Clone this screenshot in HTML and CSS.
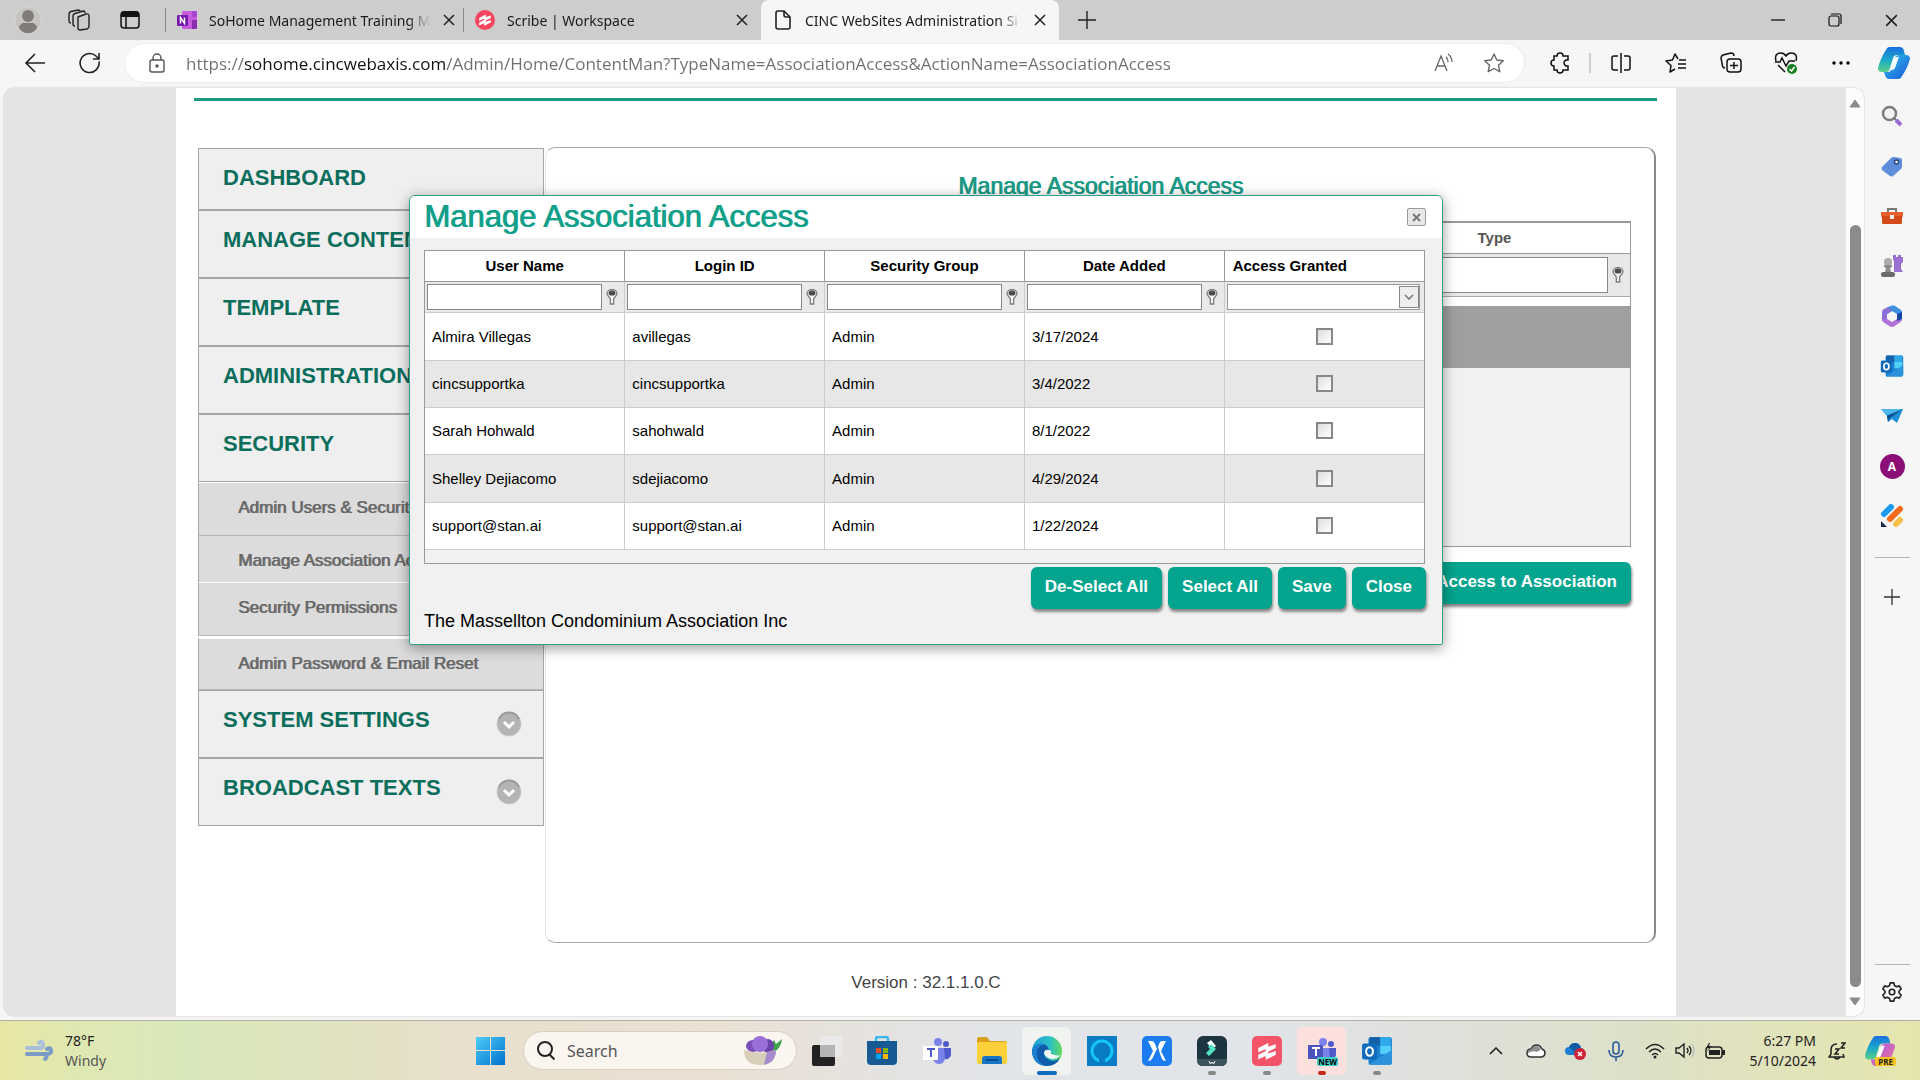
FILE: index.html
```html
<!DOCTYPE html>
<html lang="en">
<head>
    <meta charset="UTF-8">
    <title>CINC WebSites Administration Site</title>
    <link rel="stylesheet" href="styles.css">
</head>
<body>
<svg class="defs" width="0" height="0">
    <defs>
        <linearGradient id="cpA" x1="0" y1="0" x2="0" y2="1"><stop offset="0" stop-color="#1b6fe0"/><stop offset=".5" stop-color="#17a8c8"/><stop offset="1" stop-color="#5bd08a"/></linearGradient>
        <linearGradient id="cpB" x1="0" y1="0" x2="1" y2="1"><stop offset="0" stop-color="#35c4f0"/><stop offset="1" stop-color="#1556d6"/></linearGradient>
        <linearGradient id="cpC" x1="0" y1="0" x2="1" y2="1"><stop offset="0" stop-color="#a65cf0"/><stop offset="1" stop-color="#f2708c"/></linearGradient>
        <linearGradient id="edgeA" x1="0" y1="0" x2="1" y2="0"><stop offset="0" stop-color="#1f9fd8"/><stop offset=".6" stop-color="#2cc0c8"/><stop offset="1" stop-color="#63d858"/></linearGradient>
        <linearGradient id="winA" x1="0" y1="0" x2="1" y2="1"><stop offset="0" stop-color="#4fcdf7"/><stop offset="1" stop-color="#0070cc"/></linearGradient>
        <symbol id="funnel" viewBox="0 0 12 16">
            <path d="M1 4.500a5 4 0 0 1 10 0c0 2.500-3 3.500-3.300 5.500v5H4.300v-5C4 8 1 7 1 4.500z" fill="#f2f2f2" stroke="#7d7d7d" stroke-width="1.300"/>
            <ellipse cx="6" cy="4" rx="3.500" ry="2.600" fill="#4c4c4c"/>
        </symbol>
        <symbol id="cross" viewBox="0 0 14 14">
            <path d="M2 2l10 10M12 2L2 12" fill="none" stroke="#222" stroke-width="1.500"/>
        </symbol>
        <symbol id="arrow" viewBox="0 0 26 26">
            <circle cx="13" cy="13" r="12" fill="#b4b4b4" stroke="#c9c9c9"/>
            <path d="M3 8a11 11 0 0 1 20 0" fill="none" stroke="#999" stroke-width="2"/>
            <path d="M8 11l5 5 5-5" fill="none" stroke="#fff" stroke-width="3"/>
        </symbol>
        <symbol id="scribe" viewBox="0 0 24 24">
            <path d="M5 9.500l8-4v3l6-2v3l-8 4v-3l-6 2.500zM5 15l8-4v3l6-2v3l-8 4v-3l-6 2.500z" fill="#fff"/>
        </symbol>
        <symbol id="outlook" viewBox="0 0 30 30">
            <path d="M9 2h18a2 2 0 0 1 2 2v22a2 2 0 0 1-2 2H9a2 2 0 0 1-2-2V4a2 2 0 0 1 2-2z" fill="#1c7fd0"/>
            <path d="M8 2h10v8H8z" fill="#1561a8"/><path d="M18 2h10v8H18z" fill="#2fa8ea"/>
            <path d="M18 10h10v8H18z" fill="#50d0f8"/><path d="M7 28l22-14v12a2 2 0 0 1-2 2z" fill="#2d93dc"/>
            <rect x="1" y="8" width="14" height="15" rx="2" fill="#0f6cbd"/>
            <ellipse cx="8" cy="15.500" rx="3.200" ry="4" fill="none" stroke="#fff" stroke-width="2"/>
        </symbol>
        <symbol id="teams" viewBox="0 0 28 28">
            <circle cx="15" cy="5" r="4" fill="#7b83eb"/><circle cx="23" cy="7" r="3" fill="#5059c9"/>
            <path d="M9 11h13v9a6 6 0 0 1-12 2z" fill="#7b83eb"/><path d="M21 11h7v7a5 5 0 0 1-6 4z" fill="#5059c9"/>
        </symbol>
    </defs>
</svg>

<header class="tabstrip">
    <div class="tabtools">
        <button class="tool" aria-label="Profile">
            <svg width="28" height="28" viewBox="0 0 28 28"><circle cx="14" cy="14" r="13.500" fill="#c6c5c2" stroke="#dadada"/><circle cx="14" cy="10" r="6" fill="#7f7c79"/><path d="M5 22c0-3 3-5 5-5h8c2 0 5 2 5 5-4 7-14 7-18 0z" fill="#7f7c79"/></svg>
        </button>
        <button class="tool" aria-label="Workspaces">
            <svg width="22" height="22" viewBox="0 0 22 22" fill="none" stroke="#222" stroke-width="1.400"><path d="M10 8l8-3q3-.5 3 2v10q0 2-2 3l-7 1q-2 0-2-2z"/><path d="M7 17q-2 0-2-2V7q0-2 2-2.500l8-2.500q2 0 2 2"/><path d="M3 14q-2 0-2-2V5q0-2 2-2.500L10 1q2 0 2 1"/></svg>
        </button>
        <button class="tool" aria-label="Tab actions">
            <svg width="20" height="20" viewBox="0 0 20 20"><rect x="1" y="2" width="18" height="16" rx="3" fill="none" stroke="#111" stroke-width="1.500"/><path d="M1 7V4q0-3 3-3h12q3 0 3 3v3z" fill="#111"/><path d="M6 6v12" stroke="#111" stroke-width="1.500"/></svg>
        </button>
    </div>
    <div class="tab">
        <svg width="20" height="20" viewBox="0 0 20 20"><rect x="5" y="1" width="15" height="18" rx="1" fill="#c75ddc"/><path d="M15 10h5v8q0 1-1 1h-4z" fill="#8a2bb0"/><path d="M15 1h4q1 0 1 1v5h-5z" fill="#a845cf"/><rect y="5" width="11" height="11" rx="1" fill="#7719aa"/><path d="M3.500 13.500v-6l4 6v-6" fill="none" stroke="#fff" stroke-width="1.400"/></svg>
        <span class="tabname">SoHome Management Training M</span>
        <button class="tabclose" aria-label="Close tab"><svg width="14" height="14"><use href="#cross"/></svg></button>
    </div>
    <div class="tab">
        <svg width="20" height="20" viewBox="0 0 24 24"><circle cx="12" cy="12" r="12" fill="#f5455f"/><use href="#scribe"/></svg>
        <span class="tabname">Scribe | Workspace</span>
        <button class="tabclose" aria-label="Close tab"><svg width="14" height="14"><use href="#cross"/></svg></button>
    </div>
    <div class="tab active">
        <svg width="20" height="20" viewBox="0 0 20 20" fill="none" stroke="#222" stroke-width="1.600"><path d="M11 1H5Q3 1 3 3v14q0 2 2 2h10q2 0 2-2V7z"/><path d="M11 1v4q0 2 2 2h4"/></svg>
        <span class="tabname">CINC WebSites Administration Si</span>
        <button class="tabclose" aria-label="Close tab"><svg width="14" height="14"><use href="#cross"/></svg></button>
    </div>
    <button class="tool" aria-label="New tab"><svg width="18" height="18" viewBox="0 0 18 18"><path d="M9 0v18M0 9h18" stroke="#222" stroke-width="1.400"/></svg></button>
    <div class="winbtns">
        <button aria-label="Minimize"><svg width="14" height="14" viewBox="0 0 14 14"><path d="M0 7h14" stroke="#111" stroke-width="1.300"/></svg></button>
        <button aria-label="Restore"><svg width="14" height="14" viewBox="0 0 14 14" fill="none" stroke="#111" stroke-width="1.200"><rect x="1" y="3" width="10" height="10" rx="2"/><path d="M3 1h8q2 0 2 2v8"/></svg></button>
        <button aria-label="Close window"><svg width="15" height="15"><use href="#cross"/></svg></button>
    </div>
</header>

<div class="toolbar">
    <button class="tool" aria-label="Back"><svg width="22" height="20" viewBox="0 0 22 20" fill="none" stroke="#222" stroke-width="1.600"><path d="M21 10H2M11 1l-9 9 9 9"/></svg></button>
    <button class="tool" aria-label="Refresh"><svg width="22" height="22" viewBox="0 0 22 22" fill="none" stroke="#222" stroke-width="1.600"><path d="M20 9.500A9.500 9.500 0 1 1 17 4l2.500 2.500M20 1v6h-6"/></svg></button>
    <div class="address">
        <svg width="18" height="20" viewBox="0 0 18 20" fill="none" stroke="#555" stroke-width="1.400"><rect x="2" y="7" width="14" height="12" rx="2"/><path d="M5 7V5a4 4 0 0 1 8 0v2"/><circle cx="9" cy="13" r="1" fill="#555"/></svg>
        <input class="url" type="text" aria-label="Address" value="https://sohome.cincwebaxis.com/Admin/Home/ContentMan?TypeName=AssociationAccess&amp;ActionName=AssociationAccess">
        <button class="pillbtn" aria-label="Read aloud"><svg width="20" height="20" viewBox="0 0 20 20" fill="none" stroke="#666" stroke-width="1.300"><path d="M1 18L7 3l6 15M3 13h8M12 4q2 2 2 5M14 1q4 3 4 8"/></svg></button>
        <button class="pillbtn" aria-label="Add to favorites"><svg width="22" height="22" viewBox="0 0 22 22" fill="none" stroke="#666" stroke-width="1.400" stroke-linejoin="round"><path d="M11 2l2.800 6 6.500.8-4.800 4.400 1.300 6.500L11 16.500l-5.800 3.200 1.300-6.500L1.700 8.800 8.200 8z"/></svg></button>
    </div>
    <button class="tool" aria-label="Extensions"><svg width="20" height="22" viewBox="0 0 20 22" fill="none" stroke="#111" stroke-width="1.500"><path d="M4 4h3q0-3 3-3t3 3h5v4h-2q-2 1-2 3t2 3h2v4h-5q0 3-3 3t-3-3H4v-4q-3 0-3-3t3-3z"/></svg></button>
    <span class="sep"></span>
    <button class="tool" aria-label="Split screen"><svg width="22" height="20" viewBox="0 0 22 20" fill="none" stroke="#111" stroke-width="1.500"><path d="M8 3H4Q2 3 2 5v10q0 2 2 2h4M14 3h4q2 0 2 2v10q0 2-2 2h-4M11 0v20"/></svg></button>
    <button class="tool" aria-label="Favorites"><svg width="22" height="22" viewBox="0 0 22 22" fill="none" stroke="#111" stroke-width="1.500" stroke-linejoin="round"><path d="M13 7l-3-5-2.500 6L1 9l5 4.500L5 20l5-3M14 8h7M13 12h8M13 16h8"/></svg></button>
    <button class="tool" aria-label="Collections"><svg width="22" height="22" viewBox="0 0 22 22" fill="none" stroke="#111" stroke-width="1.500"><rect x="7" y="7" width="14" height="13" rx="3"/><path d="M14 10v7M10 13.500h8M5 16q-2 0-2.500-2L1 6q0-2 2-3l8-2q3 0 3 3"/></svg></button>
    <button class="tool" aria-label="Browser essentials"><svg width="24" height="24" viewBox="0 0 24 24" fill="none" stroke="#111" stroke-width="1.500"><path d="M2 10Q0 2 7 2q3 0 5 3 2-3 5-3 7 0 5 8M4 14l7 7M1 11h5l2-4 4 8 3-5h6"/><circle cx="18" cy="18" r="5" fill="#16831f" stroke="none"/><path d="M15.500 18l2 2 3-4" stroke="#fff"/></svg></button>
    <button class="tool" aria-label="Settings and more"><svg width="18" height="6" viewBox="0 0 18 6"><circle cx="2" cy="3" r="1.700"/><circle cx="9" cy="3" r="1.700"/><circle cx="16" cy="3" r="1.700"/></svg></button>
    <button class="tool side" aria-label="Copilot"><svg width="32" height="32" viewBox="0 0 32 32"><path d="M8 3q1-3 4-3h10q3 0 4 4l1 4h-8q-3 0-4 3l-3 10q-1 4-4 4H4q-4 0-4-4 3-11 8-18z" fill="url(#cpA)"/><path d="M24 29q-1 3-4 3H11q-3 0-4-4l-1-3h4q3 0 4-4l3-10q1-3 4-3h7q4 0 4 4-3 10-8 17z" fill="url(#cpB)"/><path d="M16 12q1-2 3-2h2l-4 11q-1 2-3 2h-2z" fill="#f4fbff"/></svg></button>
</div>

<div class="browser">
    <div class="page">
        <div class="container">
            <div class="rule"></div>
            <main class="main">
                <ul class="menu">
                    <li><a href="#">DASHBOARD</a></li>
                    <li><a href="#">MANAGE CONTENT</a></li>
                    <li><a href="#">TEMPLATE</a></li>
                    <li><a href="#">ADMINISTRATION</a></li>
                    <li><a href="#">SECURITY</a></li>
                    <li class="sub"><a href="#">Admin Users &amp; Security</a></li>
                    <li class="sub current"><a href="#">Manage Association Access</a></li>
                    <li class="sub"><a href="#">Security Permissions</a></li>
                    <li class="sub last"><a href="#">Admin Password &amp; Email Reset</a></li>
                    <li><a href="#">SYSTEM SETTINGS <svg width="26" height="26"><use href="#arrow"/></svg></a></li>
                    <li><a href="#">BROADCAST TEXTS <svg width="26" height="26"><use href="#arrow"/></svg></a></li>
                </ul>
                <section class="panel">
                    <h2>Manage Association Access</h2>
                    <div class="listbox">
                        <table class="list">
                            <tr><th></th><th class="typecol">Type</th></tr>
                            <tr class="filters">
                                <td></td>
                                <td><div class="filter"><input type="text" aria-label="Filter Type"><button aria-label="Filter"><svg width="12" height="16"><use href="#funnel"/></svg></button></div></td>
                            </tr>
                            <tr class="blank"><td colspan="2"></td></tr>
                            <tr class="selected"><td colspan="2"></td></tr>
                        </table>
                    </div>
                    <div class="actions"><button class="btn">Access to Association</button></div>
                </section>
            </main>
            <p class="version">Version : 32.1.1.0.C</p>

            <div class="modal" role="dialog" aria-labelledby="modalTitle">
                <div class="modalhead">
                    <h1 id="modalTitle">Manage Association Access</h1>
                    <button class="closebtn" aria-label="Close dialog"><svg width="9" height="9" viewBox="0 0 9 9"><path d="M1 1l7 7M8 1L1 8" stroke="#777" stroke-width="2"/></svg></button>
                </div>
                <div class="modalbody">
                    <div class="gridbox">
                        <table class="grid">
                            <thead>
                            <tr>
                                <th>User Name</th>
                                <th>Login ID</th>
                                <th>Security Group</th>
                                <th>Date Added</th>
                                <th class="left">Access Granted</th>
                            </tr>
                            <tr class="filters">
                                <td><div class="filter"><input type="text" aria-label="Filter User Name"><button aria-label="Filter"><svg width="12" height="16"><use href="#funnel"/></svg></button></div></td>
                                <td><div class="filter"><input type="text" aria-label="Filter Login ID"><button aria-label="Filter"><svg width="12" height="16"><use href="#funnel"/></svg></button></div></td>
                                <td><div class="filter"><input type="text" aria-label="Filter Security Group"><button aria-label="Filter"><svg width="12" height="16"><use href="#funnel"/></svg></button></div></td>
                                <td><div class="filter"><input type="text" aria-label="Filter Date Added"><button aria-label="Filter"><svg width="12" height="16"><use href="#funnel"/></svg></button></div></td>
                                <td>
                                    <div class="combo">
                                        <select aria-label="Filter Access Granted"><option></option></select>
                                        <span class="drop"><svg width="10" height="6" viewBox="0 0 10 6"><path d="M1 1l4 4 4-4" fill="none" stroke="#777" stroke-width="1.500"/></svg></span>
                                    </div>
                                </td>
                            </tr>
                            </thead>
                            <tbody>
                            <tr><td>Almira Villegas</td><td>avillegas</td><td>Admin</td><td>3/17/2024</td><td class="check"><input type="checkbox" aria-label="Access for Almira Villegas"></td></tr>
                            <tr><td>cincsupportka</td><td>cincsupportka</td><td>Admin</td><td>3/4/2022</td><td class="check"><input type="checkbox" aria-label="Access for cincsupportka"></td></tr>
                            <tr><td>Sarah Hohwald</td><td>sahohwald</td><td>Admin</td><td>8/1/2022</td><td class="check"><input type="checkbox" aria-label="Access for Sarah Hohwald"></td></tr>
                            <tr><td>Shelley Dejiacomo</td><td>sdejiacomo</td><td>Admin</td><td>4/29/2024</td><td class="check"><input type="checkbox" aria-label="Access for Shelley Dejiacomo"></td></tr>
                            <tr><td>support@stan.ai</td><td>support@stan.ai</td><td>Admin</td><td>1/22/2024</td><td class="check"><input type="checkbox" aria-label="Access for support@stan.ai"></td></tr>
                            </tbody>
                        </table>
                    </div>
                    <div class="buttons">
                        <button class="btn">De-Select All</button>
                        <button class="btn">Select All</button>
                        <button class="btn">Save</button>
                        <button class="btn">Close</button>
                    </div>
                    <p class="assoc">The Massellton Condominium Association Inc</p>
                </div>
            </div>
        </div>
        <div class="scrollbar">
            <svg width="12" height="9" viewBox="0 0 12 9"><path d="M6 1l5 7H1z" fill="#8b8b8b" stroke="#8b8b8b" stroke-linejoin="round"/></svg>
            <div class="thumb"></div>
            <svg width="12" height="9" viewBox="0 0 12 9"><path d="M6 8l5-7H1z" fill="#8b8b8b" stroke="#8b8b8b" stroke-linejoin="round"/></svg>
        </div>
    </div>
    <aside class="sidebar">
        <button aria-label="Search"><svg width="22" height="22" viewBox="0 0 22 22"><circle cx="8.500" cy="8.500" r="6.500" fill="#f3f3f3" stroke="#7d7d7d" stroke-width="2.500"/><path d="M13 13l2 2" stroke="#777" stroke-width="2"/><path d="M15 15l5 5" stroke="#9a6fd0" stroke-width="4"/></svg></button>
        <button aria-label="Shopping"><svg width="22" height="22" viewBox="0 0 22 22"><path d="M1 12L10 3q1-1 3-1l6 1q2 0 2 2v6q0 2-1 3l-8 7q-1 1-3 0l-8-6q-1-1 0-3z" fill="#5d8ddb"/><circle cx="15.500" cy="7" r="2" fill="#fff" stroke="#27467f" stroke-width="1.500"/></svg></button>
        <button aria-label="Tools"><svg width="22" height="18" viewBox="0 0 22 18"><path d="M7 5V2h8v3" fill="none" stroke="#777" stroke-width="2"/><rect y="5" width="22" height="5" rx="1" fill="#e8602c"/><rect x="1" y="9" width="20" height="8" rx="1" fill="#d24a18"/><rect x="9" y="8" width="4" height="4" fill="#eee"/></svg></button>
        <button aria-label="Games"><svg width="24" height="24" viewBox="0 0 24 24"><path d="M13 1h3v2h2V1h3v2h2v5l-2 2v5l2 3h-9V8l-1-3z" fill="#9a6fd0"/><circle cx="8" cy="8" r="4" fill="#aaa"/><path d="M4 11h8v2l-2 1 1 4H5l1-4-2-1z" fill="#8c8c8c"/><rect x="1" y="18" width="14" height="5" rx="2" fill="#6b6b6b"/></svg></button>
        <button aria-label="Microsoft 365"><svg width="22" height="22" viewBox="0 0 22 22"><path d="M7 2l4-1.500q1.500-.5 3 .5l5.500 3.500Q21 5.500 21 7v5l-5 2V9l-5-3-5 3z" fill="#3d8fe0"/><path d="M7 2l4 4-5 3v6l-1 4-3.500-3Q1 15 1 14V7q0-2 2-3z" fill="#8a6fd6"/><path d="M1 15l5-1 5 3 5-3 5-2v2q0 2-1.500 3L13 21.500q-2 .8-4 0L2.500 17q-1.500-1-1.500-2z" fill="#b070d8"/><path d="M16 9l5-2v7l-5 2z" fill="#1746a2"/></svg></button>
        <button aria-label="Outlook"><svg width="24" height="24"><use href="#outlook"/></svg></button>
        <button aria-label="Drop"><svg width="22" height="16" viewBox="0 0 22 16"><path d="M0 1h22l-6 14-5-4-4 3-1-6z" fill="#1c8fd6"/><path d="M22 1L6 8l1 6 2-4z" fill="#0c4f8f"/><path d="M22 1L0 1l6 6z" fill="#4db8ee"/></svg></button>
        <button aria-label="Account"><span class="badge">A</span></button>
        <button aria-label="Jumpshare"><svg width="24" height="26" viewBox="0 0 24 26"><g stroke-width="6" stroke-linecap="round"><path d="M4 11l7-7" stroke="#1e9bf0"/><path d="M10 16L20 6" stroke="#f26a1b"/><path d="M16 21l4-4" stroke="#f7c04a"/></g><path d="M1 18l6 6H1z" fill="#1b2350"/></svg></button>
        <span class="line"></span>
        <button aria-label="Customize"><svg width="16" height="16" viewBox="0 0 16 16"><path d="M8 0v16M0 8h16" stroke="#333" stroke-width="1.300"/></svg></button>
        <span class="line low"></span>
        <button aria-label="Settings"><svg width="22" height="22" viewBox="0 0 24 24" fill="none" stroke="#222" stroke-width="1.800" stroke-linejoin="round"><circle cx="12" cy="12" r="3"/><path d="M10 2h4l.7 3 2.300 1.200 3-.9 2 3.400-2.300 2.200v2.200l2.300 2.200-2 3.400-3-.9-2.300 1.200-.7 3h-4l-.7-3L7 17.800l-3 .9-2-3.400 2.300-2.200v-2.200L2 8.700l2-3.400 3 .9L9.300 5z"/></svg></button>
    </aside>
</div>

<footer class="taskbar">
    <div class="weather">
        <svg width="30" height="24" viewBox="0 0 30 24" fill="none" stroke-width="4" stroke-linecap="round"><path d="M2 9h13q4 0 3-4t-4-1" stroke="#a9bfdc"/><path d="M2 15h21q4-1 3-4t-4-1M14 15h6q3 3 0 5" stroke="#7a9cc6"/></svg>
        <div><div>78°F</div><div class="dim">Windy</div></div>
    </div>
    <button class="app" aria-label="Start"><svg width="30" height="30" viewBox="0 0 30 30" fill="url(#winA)"><path d="M0 1h14v13H0zM15 1h14v13H15zM0 15h14v14H0zM15 15h14v14H15z"/></svg></button>
    <div class="search">
        <svg width="20" height="20" viewBox="0 0 20 20" fill="none" stroke="#222" stroke-width="2"><circle cx="9" cy="8" r="7"/><path d="M13.500 13.500l5 5"/></svg>
        <input type="text" aria-label="Search" placeholder="Search">
        <svg width="40" height="30" viewBox="0 0 40 30"><path d="M26 12l5-8 2 4 6-5q-1 9-8 13z" fill="#3fa34d"/><ellipse cx="10" cy="10" rx="7" ry="6" fill="#7b50b8"/><ellipse cx="25" cy="10" rx="6" ry="7" fill="#6c43ab"/><ellipse cx="17" cy="8" rx="8" ry="8" fill="#9a6fd6"/><path d="M1 14q16 5 32 0 0 15-16 15T1 14z" fill="#d9cfb8"/><path d="M24 16q9-1 9-2 0 12-12 15z" fill="#a58ad0"/></svg>
    </div>
    <nav class="apps">
        <button class="app" aria-label="Task view"><svg width="30" height="30" viewBox="0 0 30 30"><rect y="9" width="23" height="21" rx="2" fill="#222"/><rect x="8" width="22" height="21" rx="2" fill="#eaeaea"/><path d="M8 9h15v12H8z" fill="#b4b4b4"/></svg></button>
        <button class="app" aria-label="Store"><svg width="30" height="30" viewBox="0 0 30 30"><path d="M9 7V3q0-2 2-2h8q2 0 2 2v4" fill="none" stroke="#38b6ee" stroke-width="2.500"/><path d="M0 5h30v20q0 4-4 4H4q-4 0-4-4z" fill="#175a94"/><path d="M9 12h5v5H9z" fill="#f25022"/><path d="M16 12h5v5h-5z" fill="#7fba00"/><path d="M9 18h5v5H9z" fill="#00a4ef"/><path d="M16 18h5v5h-5z" fill="#ffb900"/></svg></button>
        <button class="app" aria-label="Teams personal"><svg width="28" height="28" viewBox="0 0 28 28"><use href="#teams"/><rect x="0" y="9" width="15" height="14" rx="1" fill="#fff"/><path d="M4 12h8M8 12v8" stroke="#5059c9" stroke-width="2"/></svg></button>
        <button class="app" aria-label="File Explorer"><svg width="30" height="28" viewBox="0 0 30 28"><path d="M0 2q0-2 2-2h8l3 4h15q2 0 2 2v6H0z" fill="#d9a11c"/><rect y="5" width="30" height="22" rx="2" fill="#fdd03b"/><path d="M5 27v-5q0-3 3-3h14q3 0 3 3v5z" fill="#1976c5"/><path d="M9 23h12" stroke="#0b4f91" stroke-width="2"/></svg></button>
        <button class="app open" aria-label="Edge"><svg width="30" height="30" viewBox="0 0 30 30"><circle cx="15" cy="15" r="15" fill="url(#edgeA)"/><path d="M0 14Q3 7 11 8q5 1 6 6-4-1-5 3 0 6 9 8 4 0 7-3-4 8-13 8Q1 29 0 14z" fill="#0f5cab"/><path d="M0 14q3-8 12-6-9 3-7 12 1 6 8 10Q0 28 0 14z" fill="#1b80cf"/><path d="M17 14q-4-1-5 3 1 5 8 6 5 0 9-4-2 1-6 0-6-1-4-3 1-1-2-2z" fill="#f4f4f2"/></svg></button>
        <button class="app" aria-label="Alexa"><svg width="30" height="30" viewBox="0 0 30 30"><path d="M0 0h30v30H0z" fill="#0a7cc4"/><circle cx="15" cy="15" r="10" fill="none" stroke="#14c5f5" stroke-width="3"/><path d="M12 25h6" stroke="#0a7cc4" stroke-width="4"/></svg></button>
        <button class="app" aria-label="Xodo"><svg width="30" height="30" viewBox="0 0 30 30"><rect width="30" height="30" rx="5" fill="#1b7cf0"/><path d="M6 5h4q2 0 3 3l2 5-2 4-3 6q-1 2-4 2l5-10zM24 5h-4q-2 0-3 3l-1 3 2 7 2 5q1 2 4 2l-5-10z" fill="#fff"/></svg></button>
        <button class="app running" aria-label="Filmora"><svg width="30" height="30" viewBox="0 0 30 30"><rect width="30" height="30" rx="6" fill="#1b3440"/><path d="M0 23h30v1q0 6-6 6H6q-6 0-6-6z" fill="#3e535e"/><path d="M10 7l4-3 5 6-4 3z" fill="#fff"/><path d="M14 8l5 5-7 7-3-3 4-4-2-2z" fill="#50e3c2"/><path d="M12 25l1.500 3 1.500-2 1.500 2 1.500-3" fill="none" stroke="#fff"/></svg></button>
        <button class="app running" aria-label="Scribe"><svg width="30" height="30" viewBox="0 0 24 24"><rect width="24" height="24" rx="4" fill="#f2556a"/><use href="#scribe"/></svg></button>
        <button class="app alert" aria-label="Teams"><svg width="30" height="30" viewBox="0 0 30 30"><use href="#teams" width="28" height="28" x="1" y="1"/><rect x="1" y="9" width="15" height="14" rx="1" fill="#4b53bc"/><path d="M5 12h8M9 12v8" stroke="#fff" stroke-width="2"/></svg><span class="new">NEW</span></button>
        <button class="app running" aria-label="Outlook"><svg width="32" height="32"><use href="#outlook"/></svg></button>
    </nav>
    <div class="tray">
        <button aria-label="Show hidden icons"><svg width="14" height="8" viewBox="0 0 14 8"><path d="M1 7l6-6 6 6" fill="none" stroke="#222" stroke-width="1.600"/></svg></button>
        <button aria-label="Cloud"><svg width="20" height="14" viewBox="0 0 20 14"><path d="M5 13q-4 0-4-4t4-4q2-4 5.500-4T16 5q3 1 3 4t-3 4z" fill="#fff" stroke="#333" stroke-width="1.500"/><path d="M2 8q0-2 3-2.500Q7 2 10 2t5 3.500l-4 2.500q-4-2-9 1z" fill="#8e8e8e"/></svg></button>
        <button aria-label="OneDrive"><svg width="22" height="20" viewBox="0 0 22 20"><path d="M4 14q-4 0-4-4t4-4q2-4 6-4t6 5q3 0 3 4v3z" fill="#1b7fd4"/><path d="M4 6q2-4 6-4 5 0 6 5l-7 3z" fill="#1259a5"/><circle cx="15" cy="13" r="6" fill="#cf2135"/><path d="M13 11l4 4M17 11l-4 4" stroke="#fff" stroke-width="1.600"/></svg></button>
        <button aria-label="Microphone"><svg width="16" height="20" viewBox="0 0 16 20" fill="none" stroke="#2a5b9c" stroke-width="1.600"><rect x="5" y="1" width="6" height="12" rx="3"/><path d="M1 9q0 7 7 7t7-7M8 16v4"/></svg></button>
        <div class="status">
            <svg width="20" height="16" viewBox="0 0 20 16" fill="none" stroke="#222" stroke-width="1.500"><path d="M1 6q9-9 18 0M4 9q6-6 12 0M7 12q3-3 6 0"/><circle cx="10" cy="14" r="1.500" fill="#222" stroke="none"/></svg>
            <svg width="20" height="16" viewBox="0 0 20 16" fill="none" stroke="#222" stroke-width="1.400"><path d="M1 5v5h3l5 4V1L4 5z"/><path d="M12 5q2 2.500 0 5M14 3q4 4.500 0 9"/><path d="M17 1q4 6.500 0 13" stroke="#bbb"/></svg>
            <svg width="20" height="16" viewBox="0 0 20 16"><rect x="1" y="4" width="16" height="11" rx="3" fill="none" stroke="#222" stroke-width="1.500"/><path d="M4 7h11v5H4zM17 7h3v5h-3z" fill="#222"/><path d="M4 0L1 5h3L2 9l5-6H4l1-3z" fill="#222"/></svg>
        </div>
        <div class="clock"><div>6:27 PM</div><div>5/10/2024</div></div>
        <button class="bell" aria-label="Notifications"><svg width="18" height="18" viewBox="0 0 18 18" fill="none" stroke="#222" stroke-width="1.500"><path d="M9 2Q3 2 3 8v4l-2 3h15l-1-3M6 15q3 4 6 0M7 7h4l-4 5h4M13 1h4l-4 5h4"/></svg></button>
        <button class="copilot" aria-label="Copilot preview"><svg width="30" height="30" viewBox="0 0 32 32"><path d="M8 3q1-3 4-3h10q3 0 4 4l1 4h-8q-3 0-4 3l-3 10q-1 4-4 4H4q-4 0-4-4 3-11 8-18z" fill="url(#cpA)"/><path d="M24 29q-1 3-4 3H11q-3 0-4-4l-1-3h4q3 0 4-4l3-10q1-3 4-3h7q4 0 4 4-3 10-8 17z" fill="url(#cpC)"/><path d="M16 12q1-2 3-2h2l-4 11q-1 2-3 2h-2z" fill="#fff"/></svg><span class="pre">PRE</span></button>
    </div>
</footer>
</body>
</html>
```

FILE: styles.css
```css
* {
    box-sizing: border-box;
}

body {
    margin: 0;
    height: 100vh;
    display: flex;
    flex-direction: column;
    overflow: hidden;
    background-color: #f6f6f6;
    font-family: "Liberation Sans", Arial, sans-serif;
}

button {
    border: 0;
    padding: 0;
    background: none;
    font-family: inherit;
}

svg {
    display: block;
    flex-shrink: 0;
}

.defs {
    position: absolute;
}

/* tabs */
.tabstrip {
    display: flex;
    height: 40px;
    background-color: #cdcdcd;
    font-family: "Noto Sans", sans-serif;
    font-size: 14px;
}

.tabtools {
    display: flex;
    width: 165px;
    padding-left: 2px;
}

.tool {
    width: 55px;
    display: flex;
    align-items: center;
    justify-content: center;
}

.tabtools .tool {
    width: 51px;
}

.tab {
    width: 298px;
    display: flex;
    align-items: center;
    gap: 12px;
    padding: 0 12px;
    background: linear-gradient(#8a8a8a, #8a8a8a) no-repeat left center / 1px 24px;
}

.tab.active {
    background: #f6f6f6;
    border-radius: 8px 8px 0 0;
}

.tabname {
    flex: 1;
    white-space: nowrap;
    color: #1a1a1a;
    mask-image: linear-gradient(to right, #000 90%, transparent);
}

.winbtns {
    display: flex;
    margin-left: auto;
}

.winbtns button {
    width: 57px;
    display: flex;
    align-items: center;
    justify-content: center;
}

/* toolbar */
.toolbar {
    display: flex;
    height: 48px;
    padding: 4px 0 6px 7px;
    background-color: #f6f6f6;
}

.toolbar .side {
    width: 52px;
}

.address {
    flex: 1;
    display: flex;
    align-items: center;
    margin: 0 8px 0 8px;
    padding: 0 5px 0 23px;
    background-color: #fff;
    border-radius: 19px;
    box-shadow: 0 0 2px #ddd;
}

/* the host name is darker than the rest of the address */
.url {
    flex: 1;
    margin-left: 20px;
    padding: 0;
    border: 0;
    outline: 0;
    font: 17px "Open Sans", sans-serif;
    color: transparent;
    background: linear-gradient(to right, #6f6f6f 58px, #111 58px, #111 260px, #6f6f6f 260px);
    background-clip: text;
    -webkit-background-clip: text;
}

.pillbtn {
    width: 50px;
    display: flex;
    justify-content: center;
}

.sep {
    width: 2px;
    margin: 9px 2px;
    background-color: #cfcfcf;
}

/* page */
.browser {
    flex: 1;
    display: flex;
    min-height: 0;
    padding: 0 0 4px 4px;
}

.page {
    flex: 1;
    display: flex;
    padding-left: 2px;
    background-color: #e4e4e4;
    border-radius: 10px;
    overflow: hidden;
    box-shadow: 0 0 2px #bbb;
}

.container {
    position: relative;
    width: 1500px;
    margin: 0 auto;
    padding-top: 10px;
    background-color: #fff;
}

.rule {
    height: 3px;
    margin: 0 19px 0 18px;
    background-color: #1d9a86;
}

.main {
    display: flex;
    gap: 1px;
    padding: 46px 20px 0 22px;
}

.menu {
    width: 346px;
    margin: 1px 0 0;
    padding: 0;
    list-style: none;
}

.menu li {
    height: 68px;
    border: 1px solid #a6a6a6;
    background-color: #efefef;
}

.menu li:first-child {
    height: 62px;
}

.menu a {
    display: flex;
    justify-content: space-between;
    padding: 16px 21px 0 24px;
    color: #0b6e5d;
    font-size: 22px;
    font-weight: bold;
    line-height: 26px;
    text-decoration: none;
}

.menu svg {
    margin-top: 4px;
}

.menu .sub {
    height: 54px;
    border-color: #fff #a6a6a6 #b4b4b4;
    background-color: #dcdcdc;
}

.menu .sub a {
    padding: 12px 0 0 39px;
    color: #666;
    font-size: 17px;
    font-weight: normal;
    text-shadow: 1px 0 #777;
}

.menu .current {
    height: 46px;
    border-top: 0;
    border-bottom: 0;
}

.menu .last {
    margin-top: 2px;
    height: 52px;
}

.panel {
    flex: 1;
    height: 796px;
    padding: 0 23px 0 24px;
    border: 1px solid #aaa;
    border-left-color: #e6e6e6;
    border-right: 2px solid #8a8a8a;
    border-radius: 10px;
}

.panel h2 {
    margin: 25px 0 22px;
    color: #1d9a86;
    font-size: 23px;
    font-weight: normal;
    line-height: 26px;
    text-align: center;
    text-shadow: 1px 0 #1d9a86;
}

.listbox {
    height: 326px;
    border: 1px solid #999;
    border-top-width: 2px;
    background-color: #f1f1f1;
}

.list,
.grid {
    width: 100%;
    border-collapse: collapse;
    table-layout: fixed;
    font-size: 15px;
}

.list th {
    height: 30px;
    padding: 0;
    background-color: #fff;
    color: #555;
}

.list .typecol {
    width: 271px;
}

.list .filters td {
    height: 42px;
    padding: 3px 2px;
    border-top: 1px solid #999;
    border-bottom: 1px solid #aaa;
    background-color: #e8e8e8;
}

.list .filter {
    height: 36px;
}

.blank td {
    height: 10px;
    padding: 0;
    background-color: #fff;
}

.selected td {
    height: 62px;
    padding: 0;
    background-color: #9f9f9f;
}

.actions {
    display: flex;
    justify-content: flex-end;
    padding-top: 15px;
}

.btn {
    height: 42px;
    padding: 0 14px 2px;
    border-radius: 6px;
    background-color: #04a48e;
    box-shadow: 1px 3px 3px #888;
    color: #fff;
    font-size: 17px;
    font-weight: bold;
}

.version {
    margin: 29px 0 0;
    color: #444;
    font-size: 17px;
    line-height: 22px;
    text-align: center;
}

/* dialog */
.modal {
    position: absolute;
    top: 107px;
    left: 50%;
    width: 1034px;
    margin-left: -517px;
    border: 1px solid #2f9f89;
    border-radius: 6px 6px 2px 2px;
    background-color: #f1f1f1;
    box-shadow: 0 3px 14px rgba(0, 0, 0, .4);
    overflow: hidden;
}

.modalhead {
    display: flex;
    align-items: center;
    justify-content: space-between;
    height: 42px;
    padding: 0 16px 0 14px;
    background-color: #fff;
}

.modalhead h1 {
    margin: 0;
    color: #13a08b;
    font-size: 31px;
    font-weight: normal;
    line-height: 42px;
    text-shadow: 1px 0 #13a08b;
}

.closebtn {
    width: 19px;
    height: 18px;
    display: flex;
    align-items: center;
    justify-content: center;
    border: 1px solid #999;
    border-radius: 2px;
    background-color: #e8e8e8;
}

.modalbody {
    padding: 12px 17px 11px 14px;
}

.gridbox {
    height: 314px;
    border: 1px solid #999;
    background-color: #f1f1f1;
}

.grid {
    background-color: #fff;
}

.grid th {
    height: 30px;
    padding: 0;
    border-right: 1px solid #999;
    color: #000;
}

.grid .left {
    padding-left: 8px;
    text-align: left;
}

.grid th:last-child,
.grid td:last-child {
    border-right: 0;
}

.grid td {
    height: 47px;
    padding: 0 7px;
    border-right: 1px solid #ccc;
    border-bottom: 1px solid #ccc;
    color: #000;
}

.grid tbody tr:nth-child(3n+1) td {
    height: 48px;
}

.grid tbody tr:nth-child(even) td {
    background-color: #e7e7e7;
}

.grid .filters td {
    height: 31px;
    padding: 0 2px;
    border-top: 1px solid #999;
    background-color: #e9e9e9;
}

.filter {
    display: flex;
    align-items: center;
    height: 26px;
}

.filter input {
    flex: 1;
    min-width: 0;
    height: 100%;
    border: 1px solid #888;
    background-color: #fff;
}

.filter button {
    width: 20px;
    display: flex;
    justify-content: center;
}

.combo {
    position: relative;
    height: 26px;
    margin-right: 2px;
}

.combo select {
    width: 100%;
    height: 26px;
    border: 1px solid #999;
    appearance: none;
    background-color: #fff;
}

.drop {
    position: absolute;
    top: 2px;
    right: 1px;
    width: 20px;
    height: 22px;
    display: flex;
    align-items: center;
    justify-content: center;
    border: 1px solid #888;
    background-color: #eee;
    pointer-events: none;
}

.check input {
    appearance: none;
    display: block;
    width: 17px;
    height: 17px;
    margin: 0 auto;
    border: 2px solid #888;
    background: linear-gradient(135deg, #ddd, #fff);
}

.buttons {
    display: flex;
    justify-content: flex-end;
    gap: 6px;
    padding-top: 3px;
    margin-right: -1px;
}

.assoc {
    margin: 0;
    font-size: 18px;
    line-height: 24px;
}

/* scrollbar */
.scrollbar {
    width: 18px;
    display: flex;
    flex-direction: column;
    align-items: center;
    padding: 11px 0 10px;
    background-color: #fcfcfc;
}

.thumb {
    flex: 1;
    width: 11px;
    margin: 117px 0 10px;
    border-radius: 6px;
    background-color: #8b8b8b;
}

/* edge sidebar */
.sidebar {
    width: 56px;
    display: flex;
    flex-direction: column;
    align-items: center;
    padding-top: 3px;
}

.sidebar button {
    width: 50px;
    height: 50px;
    display: flex;
    align-items: center;
    justify-content: center;
}

.sidebar button:last-child {
    height: 48px;
}

.line {
    width: 35px;
    height: 1px;
    margin: 16px 0 14px;
    background-color: #b5b5b5;
}

.line.low {
    margin: auto 0 3px;
}

.badge {
    width: 25px;
    height: 25px;
    border-radius: 50%;
    background-color: #8c0f78;
    color: #fff;
    font: bold 12px/25px "Open Sans", sans-serif;
}

/* taskbar */
.taskbar {
    display: flex;
    align-items: center;
    height: 60px;
    border-top: 1px solid #b0b0a4;
    background: linear-gradient(to right, #e9e6a4, #dfe8b2 4%, #d9e8bb 10%, #dfe3be 16%, #e8dfcd 24%, #ebe0d2 36%, #e2e4e6 50%, #e1e4e9 65%, #dfe1dc 75%, #dde0c8 85%, #e5e6ae);
    color: #222;
    font-family: "Noto Sans", sans-serif;
    font-size: 14px;
    line-height: 20px;
}

.weather {
    width: 463px;
    display: flex;
    align-items: center;
    gap: 10px;
    padding-left: 25px;
}

.dim {
    color: #555;
}

.app {
    position: relative;
    width: 55px;
    height: 48px;
    display: flex;
    align-items: center;
    justify-content: center;
}

.search {
    width: 274px;
    height: 39px;
    display: flex;
    align-items: center;
    gap: 11px;
    margin: 0 2px 0 5px;
    padding: 0 13px 0 12px;
    border: 1px solid #d5cfc4;
    border-radius: 20px;
    background-color: #faf6ef;
}

.search input {
    flex: 1;
    min-width: 0;
    border: 0;
    padding: 0;
    background: none;
    font: 16px "Noto Sans", sans-serif;
}

.search input::placeholder {
    color: #555;
}

.apps {
    display: flex;
}

.open,
.alert {
    width: 49px;
    margin: 0 3px;
    border-radius: 5px;
    background-color: #f1f3f0;
}

.alert {
    background-color: #fbe0de;
}

.open::after,
.running::after,
.alert::after {
    content: "";
    position: absolute;
    bottom: 0;
    left: 50%;
    width: 8px;
    height: 4px;
    margin-left: -4px;
    border-radius: 2px;
    background-color: #888;
}

.open::after {
    width: 20px;
    margin-left: -10px;
    background-color: #0f6cbd;
}

.alert::after {
    background-color: #c42b1c;
}

.new {
    position: absolute;
    right: 8px;
    bottom: 9px;
    padding: 0 1px;
    border-radius: 2px;
    background-color: #3fd0c9;
    color: #000;
    font: bold 8px/9px "Open Sans", sans-serif;
}

.tray {
    display: flex;
    align-items: center;
    margin-left: auto;
    padding-right: 14px;
}

.tray button {
    width: 40px;
    display: flex;
    justify-content: center;
}

.status {
    display: flex;
    gap: 10px;
    padding: 0 5px;
    margin-left: 4px;
}

.clock {
    width: 90px;
    padding-right: 4px;
    text-align: right;
}

.tray .bell {
    width: 34px;
}

.tray .copilot {
    position: relative;
    width: 52px;
}

.pre {
    position: absolute;
    right: 10px;
    bottom: 0;
    padding: 0 3px;
    border-radius: 2px;
    background-color: #f8c21c;
    color: #222;
    font: bold 8px/9px "Open Sans", sans-serif;
}
```
